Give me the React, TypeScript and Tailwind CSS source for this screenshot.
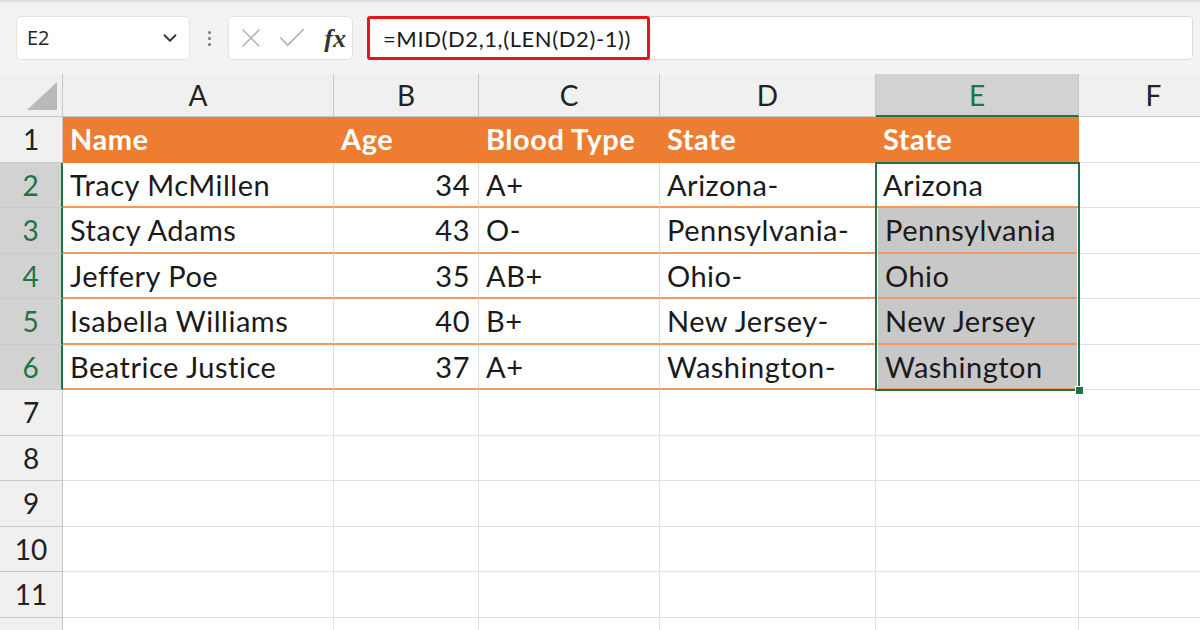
import { ChevronDown, X, Check } from "lucide-react";

const rows = [
  ["Tracy McMillen", "34", "A+", "Arizona-", "Arizona"],
  ["Stacy Adams", "43", "O-", "Pennsylvania-", "Pennsylvania"],
  ["Jeffery Poe", "35", "AB+", "Ohio-", "Ohio"],
  ["Isabella Williams", "40", "B+", "New Jersey-", "New Jersey"],
  ["Beatrice Justice", "37", "A+", "Washington-", "Washington"],
];

const heads = ["Name", "Age", "Blood Type", "State", "State"];
const letters = ["A", "B", "C", "D", "E", "F"];

function RowHead({ n, active }: { n?: number; active?: boolean }) {
  return (
    <div
      className={`flex items-center justify-center border-b border-[#c8c8c8] text-[28px] ${
        active
          ? "bg-[#d2d2d2] text-[#217346] border-r-2 border-r-[#217346]"
          : "bg-[#f0f0f0] text-[#222] border-r border-r-[#c8c8c8]"
      }`}
    >
      {n}
    </div>
  );
}

export default function App() {
  return (
    <div className="w-[1200px] h-[630px] overflow-hidden bg-white font-['Lato',sans-serif] text-[#1a1a1a]">
      {/* formula bar */}
      <div className="h-[74px] bg-[#f3f3f3] border-t-2 border-[#dedede] flex items-center pl-[16px] pr-[7px]">
        <div className="w-[174px] h-[44px] bg-white rounded-[5px] border border-[#e2e2e2] flex items-center justify-between pl-[10px] pr-[8px]">
          <span className="font-['Open_Sans',sans-serif] text-[20px] text-[#222]">E2</span>
          <ChevronDown size={22} strokeWidth={2} className="text-[#333]" />
        </div>
        <div className="w-[38px] flex flex-col items-center gap-[3px]">
          <span className="w-[3px] h-[3px] bg-[#777] rounded-full" />
          <span className="w-[3px] h-[3px] bg-[#777] rounded-full" />
          <span className="w-[3px] h-[3px] bg-[#777] rounded-full" />
        </div>
        <div className="w-[125px] h-[44px] bg-white rounded-[5px] border border-[#e2e2e2] flex items-center pl-[6px] pr-[6px] gap-[8px]">
          <X size={32} strokeWidth={1.1} className="text-[#b0b0b0]" />
          <Check size={34} strokeWidth={1.1} className="text-[#b0b0b0]" />
          <span className="ml-auto font-['Liberation_Serif',serif] italic font-bold text-[26px] text-[#333]">fx</span>
        </div>
        <div className="ml-[14px] flex-1 h-[44px] bg-white rounded-[4px] border border-[#dcdcdc] flex items-center">
          <div className="w-[283px] h-[44px] -ml-px border-[3px] border-[#e8141b] rounded-[3px] flex items-center pl-[13px] text-[22px] tracking-[0.6px] text-[#1a1a1a]">
            =MID(D2,1,(LEN(D2)-1))
          </div>
        </div>
      </div>

      {/* sheet */}
      <div className="relative grid grid-cols-[63px_271px_145px_181px_216px_203px_150px] grid-rows-[43px_repeat(12,45.5px)]">
        {/* column headers */}
        <div className="bg-[#f0f0f0] border-r border-b border-[#c8c8c8] flex items-end justify-end pr-[5px] pb-[6px]">
          <div className="w-0 h-0 border-l-[30px] border-l-transparent border-b-[28px] border-b-[#b9b9b9]" />
        </div>
        {letters.map((l) => (
          <div
            key={l}
            className={`flex items-center justify-center text-[28px] border-r border-[#c8c8c8] ${
              l === "E"
                ? "bg-[#d2d2d2] text-[#217346] border-b-2 border-b-[#217346]"
                : "bg-[#f0f0f0] text-[#222] border-b border-b-[#c8c8c8]"
            }`}
          >
            {l}
          </div>
        ))}

        {/* row 1 */}
        <RowHead n={1} />
        {heads.map((h, i) => (
          <div
            key={i}
            className="bg-[#ed7d31] text-white font-bold text-[29px] tracking-[0.5px] flex items-center pl-[7px] border-b-2 border-[#ed7d31]"
          >
            {h}
          </div>
        ))}
        <div className="border-r border-b border-[#e1e1e1]" />

        {/* data rows */}
        {rows.map((r, ri) => (
          <>
            <RowHead key={`h${ri}`} n={ri + 2} active />
            {r.map((c, ci) => (
              <div
                key={`${ri}-${ci}`}
                className={`flex items-center text-[29px] tracking-[0.5px] border-b-2 border-b-[#f29a5e] ${
                  ci === 1 ? "justify-end pr-[8px]" : "pl-[7px]"
                } ${
                  ci === 4
                    ? ri === 0
                      ? "bg-white"
                      : "bg-[#c8c8c8] mx-[2px] pl-[5px]"
                    : "border-r border-r-[#dcdcdc]"
                }`}
              >
                {c}
              </div>
            ))}
            <div key={`f${ri}`} className="border-r border-b border-[#e1e1e1]" />
          </>
        ))}

        {/* empty rows */}
        {[7, 8, 9, 10, 11, 0].map((n) => (
          <>
            <RowHead key={`h${n}`} n={n || undefined} />
            {letters.map((l) => (
              <div key={`${n}${l}`} className="border-r border-b border-[#e1e1e1]" />
            ))}
          </>
        ))}

        {/* selection outline E2:E6 */}
        <div className="absolute left-[875px] top-[88px] w-[205px] h-[229px] border-2 border-[#217346] pointer-events-none">
          <div className="absolute -right-[6px] -bottom-[6px] w-[9px] h-[9px] bg-[#217346] border border-white" />
        </div>
      </div>
    </div>
  );
}
